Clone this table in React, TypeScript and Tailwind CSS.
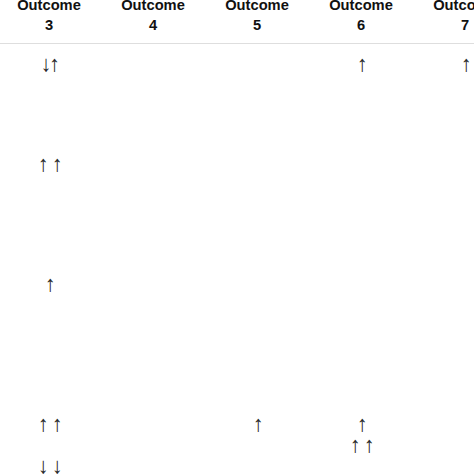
import React from "react";

const cols = ["3", "4", "5", "6", "7"];

type Cell = string[];
const rows: { h: string; cells: Cell[] }[] = [
  { h: "h-[100px]", cells: [["↓↑"], [], [], ["↑"], ["↑"]] },
  { h: "h-[120px]", cells: [["↑ ↑"], [], [], [], []] },
  { h: "h-[140px]", cells: [["↑"], [], [], [], []] },
  { h: "h-[80px]", cells: [["↑ ↑", "\u00a0", "↓ ↓"], [], ["↑"], ["↑", "↑ ↑"], []] },
];

export default function App() {
  return (
    <div
      className="w-[474px] h-[474px] overflow-hidden bg-white"
      style={{ fontFamily: '"Liberation Sans", Arial, sans-serif' }}
    >
      <div className="-ml-[3px] w-[520px]">
        <div className="grid grid-cols-[104px_104px_104px_104px_104px] h-[49px] border-b border-[#dedede] -mt-[5px]">
          {cols.map((c) => (
            <div key={c} className="text-center font-bold text-[14.7px] leading-[20px] text-[#111]">
              <div>Outcome</div>
              <div>{c}</div>
            </div>
          ))}
        </div>
        {rows.map((r, i) => (
          <div key={i} className={`grid grid-cols-[104px_104px_104px_104px_104px] ${r.h} pt-[9px]`}>
            {r.cells.map((cell, j) => (
              <div key={j} className="text-center text-[22px] leading-[20px] tracking-[-2.5px] [word-spacing:2px] text-[#2a2a2a]">
                {cell.map((t, k) => (
                  <div key={k} className="h-[21px] flex items-center justify-center">
                    <span>{t}</span>
                  </div>
                ))}
              </div>
            ))}
          </div>
        ))}
      </div>
    </div>
  );
}
